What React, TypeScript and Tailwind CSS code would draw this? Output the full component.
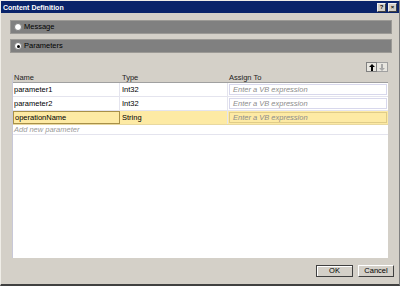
const rows = [
  { name: 'parameter1', type: 'Int32', active: false },
  { name: 'parameter2', type: 'Int32', active: false },
  { name: 'operationName', type: 'String', active: true },
];

const Radio = ({ checked }: { checked?: boolean }) => (
  <span className="w-[8px] h-[8px] rounded-full bg-white border border-[#808080] flex items-center justify-center shrink-0">
    {checked && <span className="w-[3px] h-[3px] rounded-full bg-black"></span>}
  </span>
);

const GroupBar = ({ label, checked }: { label: string; checked?: boolean }) => (
  <div className="h-[14px] bg-[#808080] border border-[#9c9a96] flex items-center gap-[2px] pl-[3px] text-black">
    <Radio checked={checked} />
    <span>{label}</span>
  </div>
);

export default function App() {
  return (
    <div
      className="w-[400px] h-[286px] bg-[#d4d0c8] flex flex-col border-l border-t border-[#f0eee8] border-b-2 border-b-[#404040] border-r border-r-[#808080] text-[7.5px] leading-none overflow-hidden"
      style={{ fontFamily: '"Liberation Sans", Arial, sans-serif' }}
    >
      <div className="h-[12px] bg-[#0a246a] flex items-center justify-between pl-[2px] pr-[2px] shrink-0">
        <span className="text-white font-bold text-[7px]">Content Definition</span>
        <div className="flex gap-[2px]">
          <span className="w-[9px] h-[9px] bg-[#d4d0c8] border border-[#f0f0f0] border-r-[#404040] border-b-[#404040] flex items-center justify-center text-[6px] font-bold text-black">?</span>
          <span className="w-[9px] h-[9px] bg-[#d4d0c8] border border-[#f0f0f0] border-r-[#404040] border-b-[#404040] flex items-center justify-center text-[6px] font-bold text-black">×</span>
        </div>
      </div>

      <div className="flex flex-col pl-[9px] pr-[7px] pt-[7px] gap-[5px]">
        <GroupBar label="Message" />
        <GroupBar label="Parameters" checked />
      </div>

      <div className="flex flex-col pl-[11px] pr-[11px] pt-[9px] flex-1 min-h-0">
        <div className="flex justify-end h-[11px]">
          <span className="w-[11px] h-[10px] bg-[#e8e6e0] border border-[#808080] flex items-center justify-center">
            <svg width="6" height="7" viewBox="0 0 6 7"><path d="M3 0L6 3H4V7H2V3H0Z" fill="#000" /></svg>
          </span>
          <span className="w-[11px] h-[10px] bg-[#e8e6e0] border border-[#a0a0a0] border-l-0 flex items-center justify-center">
            <svg width="6" height="7" viewBox="0 0 6 7"><path d="M3 7L6 4H4V0H2V4H0Z" fill="#a8a8a8" /></svg>
          </span>
        </div>

        <div className="flex-1 bg-white border-l border-[#c8c8d8] flex flex-col min-h-0">
          <div className="h-[10px] bg-[#d4d0c8] grid grid-cols-[107px_108px_1fr] items-end border-b border-[#a0a0a0] text-[#222]">
            <span className="pl-[1px] pb-[1px]">Name</span>
            <span className="pl-[2px] pb-[1px]">Type</span>
            <span className="pl-[1px] pb-[1px]">Assign To</span>
          </div>
          {rows.map((r) => (
            <div
              key={r.name}
              className={
                'h-[14px] grid grid-cols-[107px_108px_1fr] border-b ' +
                (r.active ? 'bg-[#fdeaa4] border-[#e8d8a0]' : 'bg-white border-[#e4e4ee]')
              }
            >
              <span
                className={
                  'flex items-center pl-[1px] text-black border-r ' +
                  (r.active ? 'border border-[#a89048]' : 'border-[#e4e4ee]')
                }
              >
                {r.name}
              </span>
              <span className="flex items-center pl-[2px] text-black border-r border-[#e4e4ee]">{r.type}</span>
              <span
                className={
                  'flex items-center pl-[3px] italic text-[#8c8c8c] m-[1px] border ' +
                  (r.active ? 'border-[#e0cc88]' : 'border-[#d8d8ec]')
                }
              >
                Enter a VB expression
              </span>
            </div>
          ))}
          <div className="h-[10px] flex items-center pl-[1px] italic text-[#9a9a9a] border-b border-[#e4e4ee]">
            Add new parameter
          </div>
        </div>

        <div className="h-[26px] flex justify-end items-center gap-[5px] -mr-[6px] shrink-0">
          <button className="w-[37px] h-[12px] bg-[#d4d0c8] border border-[#404040] shadow-[inset_1px_1px_0_#fff] text-black">OK</button>
          <button className="w-[36px] h-[12px] bg-[#d4d0c8] border border-t-[#fff] border-l-[#fff] border-r-[#404040] border-b-[#404040] text-black">Cancel</button>
        </div>
      </div>
    </div>
  );
}
